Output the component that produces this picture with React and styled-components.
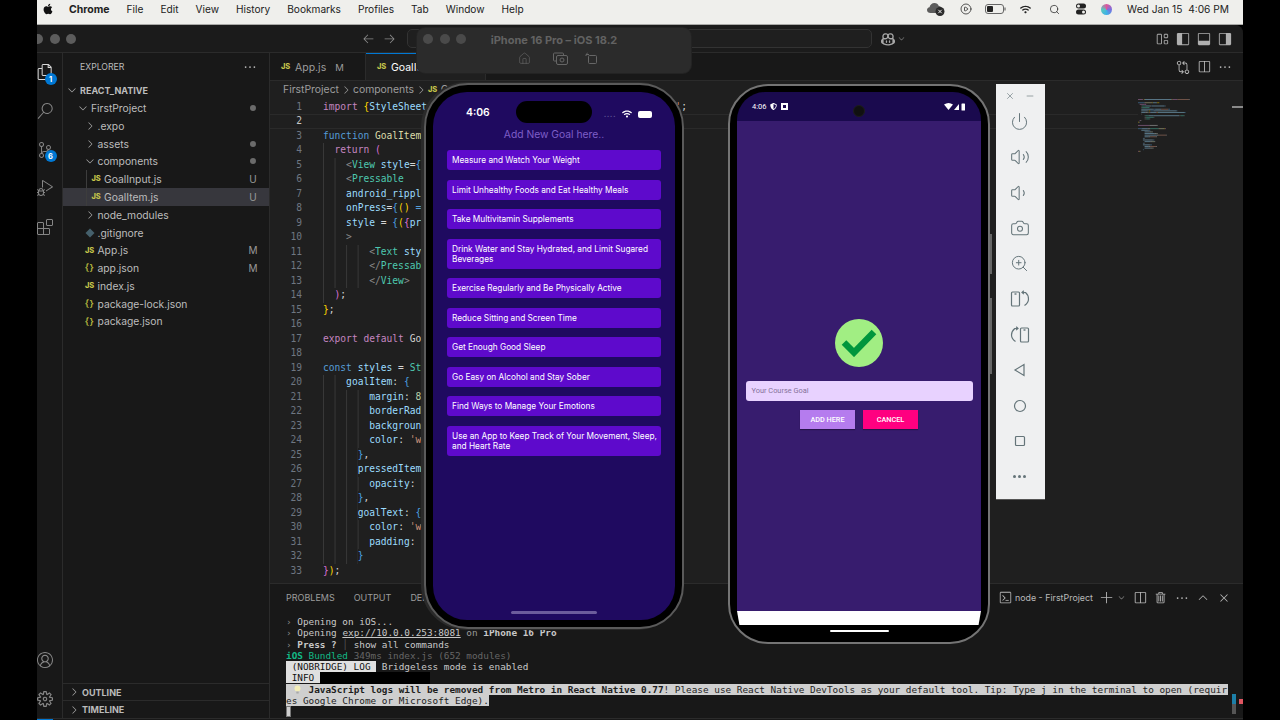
import React from "react";
import styled, { createGlobalStyle, css } from "styled-components";
import { FaApple, FaWifi, FaShieldAlt } from "react-icons/fa";
import {
  VscFiles, VscSearch, VscSourceControl, VscDebugAlt, VscExtensions, VscAccount, VscSettingsGear,
  VscEllipsis, VscChevronRight, VscChevronDown, VscChevronUp, VscTerminal, VscAdd, VscSplitHorizontal,
  VscTrash, VscClose, VscLayoutSidebarLeft, VscLayoutPanel, VscLayoutSidebarRight, VscLayout,
  VscArrowLeft, VscArrowRight, VscCopilot, VscGitCompare,
} from "react-icons/vsc";
import { Power, Volume2, Volume1, Camera, ZoomIn, X, Minus, House, CirclePlay, Search } from "lucide-react";

const UI = `Inter, "Liberation Sans", sans-serif`;
const MONO = `"DejaVu Sans Mono", "Liberation Mono", monospace`;

const Global = createGlobalStyle`
  html, body { margin: 0; padding: 0; background: #000; width: 1280px; height: 720px; overflow: hidden; }
  * { box-sizing: border-box; }
  #root { width: 1280px; height: 720px; }
`;

const Page = styled.div`
  position: relative; width: 1280px; height: 720px; padding: 0 37px; background: #000; font-family: ${UI};
`;
const Desktop = styled.div`
  width: 1206px; height: 720px; display: flex; flex-direction: column; background: #000;
`;

/* menu bar */
const MenuBar = styled.header`
  height: 25px; flex: none; display: flex; align-items: center; background: #efefec; border-bottom: 1px solid #a9a9a7;
  color: #222; font-size: 10.15px; padding: 0 0 6px 5px;
`;
const AppleMark = styled.span`display: flex; width: 12px; margin-right: 15px; font-size: 12px; color: #111;`;
const MenuItems = styled.nav`display: flex; gap: 17px;`;
const MenuItem = styled.span`font-weight: ${p => (p.$bold ? 700 : 400)}; font-size: ${p => (p.$bold ? "10.5px" : "inherit")};`;
const Tray = styled.div`margin-left: auto; display: flex; align-items: center; padding-right: 14px; color: #222;`;
const TraySlot = styled.span`display: flex; align-items: center; justify-content: center; width: ${p => p.$w}px;`;
const Clock = styled.span`margin-left: 8.5px; font-size: 10.2px; white-space: pre;`;
const Siri = styled.span`
  display: block; width: 11px; height: 11px; border-radius: 50%;
  background: conic-gradient(#e0569a, #7a6fe0, #3fb2e6, #58c7c0, #e0569a);
`;

/* window */
const Win = styled.section`
  flex: 1; min-height: 0; display: flex; flex-direction: column; overflow: hidden; background: #181818;
  border-top-right-radius: 8px; color: #c4c4c4;
`;
const TitleBar = styled.div`
  height: 28px; flex: none; display: flex; align-items: center; background: #1b1b1b; border-bottom: 1px solid #2b2b2b; padding-right: 11px;
`;
const Lights = styled.div`display: flex; gap: 6.5px; margin-left: -4px;`;
const Light = styled.span`display: block; width: 10px; height: 10px; border-radius: 50%; background: #5c5c5c;`;
const NavArrows = styled.div`display: flex; gap: 8px; margin-left: 286px; color: #8a8a8a; font-size: 13px;`;
const IconBox = styled.span`display: flex; align-items: center; justify-content: center; width: ${p => p.$w || 14}px; flex: none;`;
const CommandBox = styled.div`
  width: 465px; height: 19px; margin-left: 11px; border: 1px solid #333; border-radius: 5px; background: #1f1f1f;
`;
const Copilot = styled.div`display: flex; align-items: center; gap: 2px; margin-left: 9px; color: #a8a8a8; font-size: 14px;`;
const Actions = styled.div`margin-left: auto; display: flex; gap: 7px; color: #b0b0b0; font-size: 14px;`;

const Workbench = styled.div`flex: 1; min-height: 0; display: flex;`;
const Strip = styled.div`
  height: 2px; flex: none; background: #181818; border-top: 1px solid #2b2b2b;
`;
const StripBlue = styled.div`width: 16px; height: 100%; background: #0078d4;`;

/* activity bar */
const Activity = styled.aside`
  width: 26px; flex: none; display: flex; flex-direction: column; border-right: 1px solid #2b2b2b; overflow: hidden;
`;
const ActivitySlot = styled.div`
  position: relative; height: 38.7px; flex: none; display: flex; align-items: center; justify-content: flex-end;
  padding-right: 9px; font-size: 22px; color: ${p => (p.$active ? "#d7d7d7" : "#868686")};
`;
const ActivityGap = styled.div`flex: 1;`;
const Badge = styled.span`
  position: absolute; left: 7.5px; top: 20px; width: 12px; height: 12px; border-radius: 50%; background: #0078d4; color: #fff;
  font-size: 7.5px; font-weight: 700; display: flex; align-items: center; justify-content: center;
`;

/* sidebar */
const Sidebar = styled.aside`
  width: 207px; flex: none; display: flex; flex-direction: column; border-right: 1px solid #2b2b2b; background: #181818;
`;
const SideHead = styled.div`
  height: 28.5px; flex: none; display: flex; align-items: center; justify-content: space-between; padding: 0 12px 0 17px;
  font-size: 8.7px; color: #bbb;
`;
const HeadDots = styled.span`display: flex; font-size: 14px; color: #bbb;`;
const Row = styled.div`
  position: relative; height: 17.77px; flex: none; display: flex; align-items: center; font-size: 10.3px; color: #bdbdbd;
  padding-left: ${p => p.$indent}px; padding-right: 12px;
  background: ${p => (p.$selected ? "#37373d" : "transparent")};
  font-weight: ${p => (p.$strong ? 700 : 400)};
  ${p => p.$strong && css`font-size: 9px;`}
  ${p => p.$guide && css`
    &::before { content: ""; position: absolute; left: 23px; top: 0; bottom: 0; width: 1px; background: #3d3d3d; }
  `}
`;
const Lead = styled.span`display: flex; align-items: center; justify-content: center; width: 12px; margin-right: 2px; flex: none; font-size: 12px; color: #a8a8a8;`;
const RowLabel = styled.span`flex: 1; white-space: nowrap;`;
const RowMark = styled.span`width: 8px; display: flex; justify-content: center; font-size: 10px; font-weight: 400; color: #9a9a9a;`;
const ModDot = styled.span`display: block; width: 6px; height: 6px; border-radius: 50%; background: #6b6b6b;`;
const FileGlyph = styled.span`
  font-family: ${UI}; font-weight: 800; font-size: 7.5px; color: #c4c44a; letter-spacing: -0.2px; line-height: 1;
`;
const BraceGlyph = styled(FileGlyph)`font-size: 9.5px; font-weight: 600; color: #b5b53f; letter-spacing: 0.4px;`;
const Fill = styled.div`flex: 1;`;
const SideFoot = styled.div`
  height: 17.6px; flex: none; display: flex; align-items: center; padding-left: 5px; border-top: 1px solid #2b2b2b; font-size: 9px; font-weight: 700; color: #bbb;
`;

/* editor */
const Main = styled.main`flex: 1; min-width: 0; display: flex; flex-direction: column; background: #1f1f1f;`;
const Tabs = styled.div`height: 28px; flex: none; display: flex; align-items: stretch; background: #181818; border-bottom: 1px solid #2b2b2b;`;
const Tab = styled.div`
  width: ${p => p.$w}px; flex: none; display: flex; align-items: center; gap: 5px; padding-left: 11px; font-size: 10.5px;
  color: ${p => (p.$active ? "#fff" : "#9d9d9d")}; background: ${p => (p.$active ? "#1f1f1f" : "transparent")};
  border-right: 1px solid #2b2b2b; border-top: 1px solid ${p => (p.$active ? "#0078d4" : "transparent")};
`;
const TabMark = styled.span`margin-left: 4px; font-size: 9.5px; color: #9d9d9d;`;
const TabActions = styled.div`margin-left: auto; display: flex; align-items: center; gap: 7px; padding-right: 11px; font-size: 14px; color: #b8b8b8;`;
const Crumbs = styled.div`
  height: 17px; flex: none; display: flex; align-items: center; gap: 1px; padding-left: 13px; font-size: 10.4px; color: #9d9d9d; white-space: nowrap;
`;
const CrumbSep = styled.span`display: flex; font-size: 12px;`;
const CodeWrap = styled.div`flex: 1; min-height: 0; display: flex; position: relative;`;
const Code = styled.div`flex: 1; min-width: 0; padding-top: 1.5px; font-family: ${MONO}; font-size: 9.6px; line-height: 14.5px;`;
const CodeLine = styled.div`
  display: flex; height: 14.5px; white-space: pre;
  ${p => p.$current && css`box-shadow: inset 0 1px 0 #2a2a2a, inset 0 -1px 0 #2a2a2a;`}
`;
const Gutter = styled.span`width: 53px; flex: none; text-align: right; padding-right: 21px; color: ${p => (p.$current ? "#c6c6c6" : "#6e7681")};`;
const Guides = styled.span`
  display: inline-block; height: 100%; vertical-align: top; width: ${p => p.$n * 5.78}px;
  background-image: linear-gradient(90deg, #383838 0 1px, transparent 1px);
  background-size: 11.56px 100%;
`;
const Tok = styled.span`color: ${p => p.$c};`;
const Miniside = styled.div`width: 105px; flex: none; position: relative; display: flex;`;
const MiniCol = styled.div`width: 94px; padding-top: 1px; flex: none;`;
const Ruler = styled.div`flex: 1; padding-top: 8px;`;
const RulerMark = styled.div`height: 2px; background: #8a8a8a;`;

/* panel */
const Panel = styled.section`
  height: 135px; flex: none; display: flex; flex-direction: column; background: #181818; border-top: 1px solid #2b2b2b; position: relative;
`;
const PanelBar = styled.div`height: 27px; flex: none; display: flex; align-items: center; padding: 0 12px 0 16px; font-size: 9px; color: #9d9d9d;`;
const PanelTabs = styled.div`display: flex; gap: 19px;`;
const PanelActs = styled.div`margin-left: auto; display: flex; align-items: center; gap: 7px; font-size: 14px; color: #b8b8b8;`;
const TermName = styled.div`display: flex; align-items: center; gap: 3px; font-size: 8.9px; color: #b8b8b8;`;
const TermChip = styled.span`display: flex; font-size: 13px;`;
const AddGroup = styled.div`display: flex; align-items: center; gap: 3px;`;
const Term = styled.div`
  padding: 5px 0 0 16px; font-family: ${MONO}; font-size: 9.37px; line-height: 11.25px; color: #c8c8c8;
`;
const TermLine = styled.div`
  height: 11.25px; white-space: pre;
  ${p => p.$sel && css`width: ${p.$sel}px; background: #cfcfcf; color: #1d1d1d;`}
`;
const T = styled.span`
  color: ${p => p.$c || "inherit"};
  font-weight: ${p => (p.$b ? 700 : 400)};
  ${p => p.$u && css`text-decoration: underline;`}
  ${p => p.$bg && css`background: ${p.$bg};`}
`;
const Filler = styled.span`display: inline-block; vertical-align: top; height: 11.25px; width: ${p => p.$w}px; background: #000;`;
const BulbBox = styled.span`display: inline-block; vertical-align: top; width: 11.28px; height: 11.25px;`;
const Cursor = styled.span`display: block; width: 5px; height: 10.5px; background: #cfcfcf; border: 1px solid #777;`;
const TermScroll = styled.div`position: absolute; right: 7px; top: 110px; width: 4px; height: 20px; background: linear-gradient(#1d7fa8 0 50%, #555 50%);`;
const TermMark = styled.div`position: absolute; right: 0; top: 115px; width: 4px; height: 5px; background: #e05561;`;

/* simulator title window */
const SimBar = styled.div`
  position: absolute; left: 417px; top: 28px; width: 274px; height: 45px; border-radius: 8px; background: #2b2b2b;
  box-shadow: 0 0 0 1px #232323; display: flex; flex-direction: column; align-items: center; padding-top: 5px; color: #666;
`;
const SimLights = styled.div`position: absolute; left: 6px; top: 6px; display: flex; gap: 6.5px;`;
const SimLight = styled.span`display: block; width: 10px; height: 10px; border-radius: 50%; background: #4a4a4a;`;
const SimTitle = styled.div`font-size: 11px; font-weight: 700; line-height: 14px; color: #626262;`;
const SimTools = styled.div`display: flex; align-items: center; margin-top: 5px; margin-left: 8px;`;
const SimGap = styled.span`display: block; width: ${p => p.$w}px;`;

/* iPhone */
const IPhone = styled.div`
  position: absolute; left: 424px; top: 83px; width: 260px; height: 546px; padding: 7px; border-radius: 44px; background: #000;
  border: 2px solid #5a5a5a; box-shadow: -2px 0 0 1px #2a2a2a;
`;
const IScreen = styled.div`
  position: relative; width: 100%; height: 100%; border-radius: 34px; overflow: hidden; background: #1f0a60; color: #fff;
`;
const Island = styled.div`position: absolute; left: 83px; top: 9px; width: 76px; height: 22px; border-radius: 11px; background: #000;`;
const IStatus = styled.div`height: 34px; display: flex; align-items: flex-end; padding: 0 23px 7px 33px; justify-content: space-between;`;
const ITime = styled.span`font-size: 10.4px; font-weight: 600; line-height: 13px;`;
const IIcons = styled.div`display: flex; align-items: center; gap: 6px;`;
const IDots = styled.span`font-size: 9px; letter-spacing: 0.5px; color: #5d4f92; line-height: 8px;`;
const IBattery = styled.span`display: block; width: 14px; height: 7px; border-radius: 2px; background: #fff;`;
const GoalTitle = styled.div`height: 24px; text-align: center; font-size: 10.3px; line-height: 17px; color: #7e5ec8;`;
const GoalList = styled.ul`list-style: none; margin: 0; padding: 0 14px; display: flex; flex-direction: column; gap: 9.55px;`;
const Goal = styled.li`
  padding: 5px 3px 5px 5px; border-radius: 3px; background: #5e0acc; font-size: 8.27px; line-height: 10px; color: #fff;
`;
const HomeBar = styled.div`position: absolute; left: 78px; bottom: 6px; width: 86px; height: 3px; border-radius: 2px; background: #6c5c9c;`;

/* Android */
const Android = styled.div`
  position: absolute; left: 728px; top: 84px; width: 262px; height: 560px; padding: 6px 7px 0; border-radius: 40px; background: #000;
  border: 2px solid #747474;
`;
const SideKey = styled.div`position: absolute; right: -4px; top: ${p => p.$top}px; width: 2px; height: ${p => p.$h}px; background: #666;`;
const AScreen = styled.div`display: flex; flex-direction: column; height: 100%;`;
const AStatus = styled.div`
  position: relative; height: 29px; flex: none; display: flex; align-items: center; justify-content: space-between; padding: 0 15px 0 15px;
  background: #1a0a4e; border-radius: 28px 28px 0 0; color: #fff; font-family: Roboto, sans-serif; font-size: 7.5px;
`;
const AGroup = styled.div`display: flex; align-items: center; gap: 4px;`;
const ACam = styled.div`
  position: absolute; left: 116px; top: 13px; width: 12px; height: 12px; border-radius: 50%; background: #101010; border: 1px solid #1d1d1d;
`;
const ABody = styled.div`
  height: 490px; flex: none; display: flex; flex-direction: column; align-items: center; padding: 198px 8px 0; background: #371c6e;
  font-family: Roboto, sans-serif;
`;
const Check = styled.div`
  width: 48px; height: 48px; border-radius: 50%; background: #a1ee83; display: flex; align-items: center; justify-content: center;
`;
const GoalInput = styled.div`
  width: 227px; height: 20px; margin-top: 14px; border-radius: 3px; background: #e8d2ff; color: #85739a; font-size: 7.4px; line-height: 20px; padding-left: 6px;
`;
const BtnRow = styled.div`display: flex; gap: 8px; margin-top: 9px;`;
const ABtn = styled.div`
  width: 55px; height: 19px; background: ${p => p.$bg}; color: #fff; font-size: 7.3px; font-weight: 500; display: flex; align-items: center; justify-content: center; box-shadow: 0 1px 1px rgba(0,0,0,.3);
`;
const ANav = styled.div`height: 14px; flex: none; background: #fff; clip-path: polygon(0 0, 100% 0, 99% 100%, 1% 100%);`;
const AFoot = styled.div`flex: 1; padding-top: 5px; display: flex; justify-content: center;`;
const APill = styled.div`width: 59px; height: 2px; background: #fff; border-radius: 1px;`;

/* Emulator toolbar */
const Tools = styled.aside`
  position: absolute; left: 996px; top: 84px; width: 49px; height: 415px; background: #eff0f1; color: #647479; display: flex; flex-direction: column; align-items: center;
  box-shadow: 0 1px 0 #555;
`;
const ToolHead = styled.div`height: 20px; width: 100%; flex: none; display: flex; align-items: center; justify-content: space-between; padding: 4px 10px 0 9px;`;
const ToolSlot = styled.div`height: 35.5px; width: 100%; padding-right: 2px; flex: none; display: flex; align-items: center; justify-content: center;`;
const ToolDots = styled.div`display: flex; gap: 2px;`;
const ToolDot = styled.span`display: block; width: 3px; height: 3px; border-radius: 50%; background: #647479;`;

const Col = { kw: "#c586c0", fn: "#dcdcaa", v: "#9cdcfe", s: "#ce9178", tag: "#4ec9b0", p: "#8a8a8a", y: "#ffd700", w: "#d4d4d4", pu: "#da70d6", blue: "#4a9fe0", k2: "#569cd6", n: "#b5cea8" };

const codeLines = [
  [0, [["import", Col.kw], [" ", Col.w], ["{", Col.y], ["StyleSheet, View, Text, Pressable", Col.v], ["}", Col.y], [" from ", Col.kw], ["'react-native'", Col.s], [";", Col.w]]],
  [0, []],
  [0, [["function", Col.k2], [" GoalItem", Col.fn], ["(", Col.y], ["props", Col.v], [")", Col.y], [" {", Col.y]]],
  [2, [["return", Col.kw], [" (", Col.pu]]],
  [4, [["<", Col.p], ["View", Col.tag], [" style", Col.v], ["=", Col.w], ["{", Col.blue], ["styles.goalItem", Col.v], ["}", Col.blue], [">", Col.p]]],
  [4, [["<", Col.p], ["Pressable", Col.tag]]],
  [4, [["android_ripple", Col.v], ["=", Col.w], ["{{", Col.blue], ["color: ", Col.v], ["'#dddddd'", Col.s], ["}}", Col.blue]]],
  [4, [["onPress", Col.v], ["=", Col.w], ["{", Col.blue], ["()", Col.y], [" => ", Col.k2], ["props.onDeleteItem(props.id)", Col.v], ["}", Col.blue]]],
  [4, [["style", Col.v], [" = ", Col.w], ["{", Col.blue], ["(", Col.y], ["{", Col.pu], ["pressed", Col.v], ["}", Col.pu], [")", Col.y], [" => pressed && styles.pressedItem", Col.v], ["}", Col.blue]]],
  [4, [[">", Col.p]]],
  [8, [["<", Col.p], ["Text", Col.tag], [" style", Col.v], ["={styles.goalText}>{props.text}", Col.v], ["</", Col.p], ["Text", Col.tag], [">", Col.p]]],
  [8, [["</", Col.p], ["Pressable", Col.tag], [">", Col.p]]],
  [8, [["</", Col.p], ["View", Col.tag], [">", Col.p]]],
  [2, [[")", Col.pu], [";", Col.w]]],
  [0, [["}", Col.y], [";", Col.w]]],
  [0, []],
  [0, [["export default", Col.kw], [" GoalItem", Col.w], [";", Col.w]]],
  [0, []],
  [0, [["const", Col.k2], [" styles", Col.v], [" = ", Col.w], ["StyleSheet", Col.tag], [".create", Col.fn], ["(", Col.y], ["{", Col.pu]]],
  [4, [["goalItem", Col.v], [":", Col.w], [" {", Col.blue]]],
  [8, [["margin", Col.v], [": ", Col.w], ["8", Col.n], [",", Col.w]]],
  [8, [["borderRadius", Col.v], [": ", Col.w], ["6", Col.n], [",", Col.w]]],
  [8, [["backgroundColor", Col.v], [": ", Col.w], ["'#5e0acc'", Col.s], [",", Col.w]]],
  [8, [["color", Col.v], [": ", Col.w], ["'white'", Col.s], [",", Col.w]]],
  [6, [["}", Col.blue], [",", Col.w]]],
  [6, [["pressedItem", Col.v], [":", Col.w], [" {", Col.blue]]],
  [8, [["opacity", Col.v], [": ", Col.w], ["0.5", Col.n], [",", Col.w]]],
  [6, [["}", Col.blue], [",", Col.w]]],
  [6, [["goalText", Col.v], [":", Col.w], [" {", Col.blue]]],
  [8, [["color", Col.v], [": ", Col.w], ["'white'", Col.s], [",", Col.w]]],
  [8, [["padding", Col.v], [": ", Col.w], ["8", Col.n], [",", Col.w]]],
  [6, [["}", Col.blue]]],
  [0, [["}", Col.pu], [")", Col.y], [";", Col.w]]],
];

function Minimap() {
  const rects = [];
  codeLines.forEach(([indent, toks], i) => {
    let x = indent * 0.82;
    toks.forEach(([t, c], j) => {
      const w = t.length * 0.82;
      if (t.trim()) rects.push(<rect key={`${i}-${j}`} x={x} y={i * 1.62} width={w} height={1} fill={c} opacity={0.45} />);
      x += w;
    });
  });
  return <svg width="94" height="56" viewBox="0 0 94 56">{rects}</svg>;
}

const JS = () => <FileGlyph>JS</FileGlyph>;
const Json = () => <BraceGlyph>{"{}"}</BraceGlyph>;
const GitDiamond = () => (
  <svg width="10" height="10" viewBox="0 0 10 10"><path d="M5 .5 9.5 5 5 9.5.5 5z" fill="#45606c" /></svg>
);

const tree = [
  { n: "REACT_NATIVE", i: 3, lead: <VscChevronDown />, strong: true },
  { n: "FirstProject", i: 14, lead: <VscChevronDown />, dot: true },
  { n: ".expo", i: 20.5, lead: <VscChevronRight /> },
  { n: "assets", i: 20.5, lead: <VscChevronRight />, dot: true },
  { n: "components", i: 20.5, lead: <VscChevronDown />, dot: true },
  { n: "GoalInput.js", i: 27, lead: <JS />, mark: "U", guide: true },
  { n: "GoalItem.js", i: 27, lead: <JS />, mark: "U", guide: true, sel: true },
  { n: "node_modules", i: 20.5, lead: <VscChevronRight /> },
  { n: ".gitignore", i: 20.5, lead: <GitDiamond /> },
  { n: "App.js", i: 20.5, lead: <JS />, mark: "M" },
  { n: "app.json", i: 20.5, lead: <Json />, mark: "M" },
  { n: "index.js", i: 20.5, lead: <JS /> },
  { n: "package-lock.json", i: 20.5, lead: <Json /> },
  { n: "package.json", i: 20.5, lead: <Json /> },
];

const goals = [
  "Measure and Watch Your Weight",
  "Limit Unhealthy Foods and Eat Healthy Meals",
  "Take Multivitamin Supplements",
  "Drink Water and Stay Hydrated, and Limit Sugared Beverages",
  "Exercise Regularly and Be Physically Active",
  "Reduce Sitting and Screen Time",
  "Get Enough Good Sleep",
  "Go Easy on Alcohol and Stay Sober",
  "Find Ways to Manage Your Emotions",
  "Use an App to Keep Track of Your Movement, Sleep, and Heart Rate",
];

const menus = ["File", "Edit", "View", "History", "Bookmarks", "Profiles", "Tab", "Window", "Help"];

const RotateLeft = () => (
  <svg width="20" height="20" viewBox="0 0 20 20" fill="none" stroke="currentColor" strokeWidth="1.2">
    <rect x="1.5" y="3" width="8" height="14" rx="1" />
    <path d="M4.5 5h2" strokeWidth="1.4" />
    <path d="M12 3.5h3.5c2.5 2 3 4 3 6.5s-1 4.500-4 6.500" />
    <path d="M13.800 1.800 12 3.500l2 1.600" />
  </svg>
);
const RotateRight = () => (
  <svg width="20" height="20" viewBox="0 0 20 20" fill="none" stroke="currentColor" strokeWidth="1.2">
    <rect x="10.500" y="3" width="8" height="14" rx="1" />
    <path d="M13.500 5h2" strokeWidth="1.4" />
    <path d="M8 3.500H4.800C2.500 5.500 1.500 7.500 1.500 10s1 4.500 4 6.500" />
    <path d="M6.200 1.800 8 3.500 6 5.100" />
  </svg>
);

const SimRotate = () => (
  <svg width="13" height="13" viewBox="0 0 13 13" fill="none" stroke="currentColor" strokeWidth="1">
    <rect x="3.500" y="3.500" width="8" height="8" rx="1" />
    <path d="M1 4V2.500h3M2.700 1 1 2.500" />
  </svg>
);

const SimShot = () => (
  <svg width="15" height="13" viewBox="0 0 15 13" fill="none" stroke="currentColor" strokeWidth="1">
    <rect x=".5" y="1" width="10" height="8" rx="1" />
    <rect x="3.500" y="3.500" width="11" height="9" rx="1.500" fill="#2b2b2b" />
    <circle cx="9" cy="8" r="2" />
  </svg>
);

const CloudBadge = () => (
  <svg width="18" height="14" viewBox="0 0 18 14">
    <path d="M3.500 11C1.500 11 0 9.700 0 8c0-1.500 1-2.500 2.500-2.800C3 2.800 5 1 7.500 1c2 0 3.700 1.200 4.300 3 1.800.1 3 1.500 3 3.200 0 2.200-1.500 3.800-3.500 3.800z" fill="#5c5c5c" />
    <circle cx="13" cy="9.500" r="4.500" fill="#2a2a2a" />
    <path d="M11.300 7.800 14.700 11.200M14.700 7.800 11.300 11.200" stroke="#eee" strokeWidth="1" />
  </svg>
);
const MacBattery = () => (
  <svg width="22" height="10" viewBox="0 0 22 10" fill="none">
    <rect x=".5" y=".5" width="18" height="9" rx="2.500" stroke="#666" />
    <rect x="2" y="2" width="6" height="6" rx="1" fill="#222" />
    <path d="M20 3.500v3" stroke="#666" strokeWidth="1.200" />
  </svg>
);
const ControlCenter = () => (
  <svg width="12" height="12" viewBox="0 0 12 12">
    <rect x="1" y=".5" width="10" height="5" rx="2.500" fill="#222" />
    <circle cx="3.500" cy="3" r="1.500" fill="#efefec" />
    <rect x="1" y="6.500" width="10" height="5" rx="2.500" fill="#222" />
    <circle cx="8.500" cy="9" r="1.500" fill="#efefec" />
  </svg>
);
const ASignal = () => (
  <svg width="22" height="8" viewBox="0 0 22 8" fill="#fff">
    <path d="M0 1.500C1.500.5 3 0 4.500 0S7.500.5 9 1.500L4.500 7z" />
    <path d="M15 1v6h-5z" />
    <rect x="17.500" y=".5" width="3.500" height="7" rx=".6" />
  </svg>
);
const AShot = () => (
  <svg width="7" height="7" viewBox="0 0 7 7"><path d="M0 0h7v7H0z" fill="#fff" /><path d="M2 2h3v3H2z" fill="#1a0a4e" /></svg>
);
const Bulb = () => (
  <BulbBox>
    <svg width="11" height="11" viewBox="0 0 11 11">
      <circle cx="5.500" cy="4.500" r="3" fill="#f4eeb8" />
      <rect x="4.300" y="7.500" width="2.400" height="2" fill="#a8a8a8" />
    </svg>
  </BulbBox>
);

export default function App() {
  return (
    <Page>
      <Global />
      <Desktop>
        <MenuBar>
          <AppleMark><FaApple /></AppleMark>
          <MenuItems>
            <MenuItem $bold>Chrome</MenuItem>
            {menus.map(m => <MenuItem key={m}>{m}</MenuItem>)}
          </MenuItems>
          <Tray>
            <TraySlot $w={29}><CloudBadge /></TraySlot>
            <TraySlot $w={30}><CirclePlay size={12} strokeWidth={1.5} /></TraySlot>
            <TraySlot $w={30}><MacBattery /></TraySlot>
            <TraySlot $w={30}><FaWifi size={11} /></TraySlot>
            <TraySlot $w={28}><Search size={11} strokeWidth={1.6} /></TraySlot>
            <TraySlot $w={25}><ControlCenter /></TraySlot>
            <TraySlot $w={25}><Siri /></TraySlot>
            <Clock>Wed Jan 15  4:06 PM</Clock>
          </Tray>
        </MenuBar>
        <Win>
          <TitleBar>
            <Lights><Light /><Light /><Light /></Lights>
            <NavArrows><IconBox $w={13}><VscArrowLeft /></IconBox><IconBox $w={13}><VscArrowRight /></IconBox></NavArrows>
            <CommandBox />
            <Copilot><VscCopilot /><VscChevronDown size={9} /></Copilot>
            <Actions>
              <IconBox><VscLayout /></IconBox>
              <IconBox><VscLayoutSidebarLeft /></IconBox>
              <IconBox><VscLayoutPanel /></IconBox>
              <IconBox><VscLayoutSidebarRight /></IconBox>
            </Actions>
          </TitleBar>
          <Workbench>
            <Activity>
              <ActivitySlot $active><VscFiles /><Badge>1</Badge></ActivitySlot>
              <ActivitySlot><VscSearch /></ActivitySlot>
              <ActivitySlot><VscSourceControl /><Badge>6</Badge></ActivitySlot>
              <ActivitySlot><VscDebugAlt /></ActivitySlot>
              <ActivitySlot><VscExtensions /></ActivitySlot>
              <ActivityGap />
              <ActivitySlot><VscAccount /></ActivitySlot>
              <ActivitySlot><VscSettingsGear /></ActivitySlot>
            </Activity>
            <Sidebar>
              <SideHead>EXPLORER<HeadDots><VscEllipsis /></HeadDots></SideHead>
              {tree.map(r => (
                <Row key={r.n} $indent={r.i} $selected={r.sel} $strong={r.strong} $guide={r.guide}>
                  <Lead>{r.lead}</Lead>
                  <RowLabel>{r.n}</RowLabel>
                  <RowMark>{r.dot ? <ModDot /> : r.mark}</RowMark>
                </Row>
              ))}
              <Fill />
              <SideFoot><Lead><VscChevronRight /></Lead>OUTLINE</SideFoot>
              <SideFoot><Lead><VscChevronRight /></Lead>TIMELINE</SideFoot>
            </Sidebar>
            <Main>
              <Tabs>
                <Tab $w={96}><JS />App.js<TabMark>M</TabMark></Tab>
                <Tab $w={120} $active><JS />GoalItem.js<TabMark>U</TabMark></Tab>
                <TabActions>
                  <IconBox><VscGitCompare /></IconBox>
                  <IconBox><VscSplitHorizontal /></IconBox>
                  <IconBox><VscEllipsis /></IconBox>
                </TabActions>
              </Tabs>
              <Crumbs>
                FirstProject<CrumbSep><VscChevronRight /></CrumbSep>components<CrumbSep><VscChevronRight /></CrumbSep><JS />&nbsp;GoalItem.js
              </Crumbs>
              <CodeWrap>
                <Code>
                  {codeLines.map(([indent, toks], i) => (
                    <CodeLine key={i} $current={i === 1}>
                      <Gutter $current={i === 1}>{i + 1}</Gutter>
                      <span>
                        {indent > 0 && <Guides $n={indent} />}
                        {toks.map(([t, c], j) => <Tok key={j} $c={c}>{t}</Tok>)}
                      </span>
                    </CodeLine>
                  ))}
                </Code>
                <Miniside>
                  <MiniCol><Minimap /></MiniCol>
                  <Ruler><RulerMark /></Ruler>
                </Miniside>
              </CodeWrap>
              <Panel>
                <PanelBar>
                  <PanelTabs><span>PROBLEMS</span><span>OUTPUT</span><span>DEBUG CONSOLE</span></PanelTabs>
                  <PanelActs>
                    <TermName><TermChip><VscTerminal /></TermChip>node - FirstProject</TermName>
                    <AddGroup><IconBox><VscAdd /></IconBox><VscChevronDown size={9} /></AddGroup>
                    <IconBox><VscSplitHorizontal /></IconBox>
                    <IconBox><VscTrash /></IconBox>
                    <IconBox><VscEllipsis /></IconBox>
                    <IconBox><VscChevronUp /></IconBox>
                    <IconBox><VscClose /></IconBox>
                  </PanelActs>
                </PanelBar>
                <Term>
                  <TermLine><T $c="#888">› </T>Opening on iOS...</TermLine>
                  <TermLine><T $c="#888">› </T>Opening <T $u>exp://10.0.0.253:8081</T> <T $c="#999">on</T> <T $b>iPhone 16 Pro</T></TermLine>
                  <TermLine><T $c="#888">› </T><T $b>Press ?</T> <T $c="#555">│</T> show all commands</TermLine>
                  <TermLine><T $c="#12b886" $b>iOS</T> <T $c="#12b886">Bundled</T> <T $c="#666">349ms index.js (652 modules)</T></TermLine>
                  <TermLine><T $bg="#e0e0e0" $c="#111"> (NOBRIDGE) LOG </T> Bridgeless mode is enabled</TermLine>
                  <TermLine><T $bg="#e0e0e0" $c="#111"> INFO </T><Filler $w={110} /></TermLine>
                  <TermLine $sel={942}> <Bulb /> <T $b>JavaScript logs will be removed from Metro in React Native 0.77</T>! Please use React Native DevTools as your default tool. Tip: Type j in the terminal to open (requir</TermLine>
                  <TermLine $sel={203}>es Google Chrome or Microsoft Edge).</TermLine>
                  <TermLine><Cursor /></TermLine>
                </Term>
                <TermScroll />
                <TermMark />
              </Panel>
            </Main>
          </Workbench>
          <Strip><StripBlue /></Strip>
        </Win>
      </Desktop>

      <SimBar>
        <SimLights><SimLight /><SimLight /><SimLight /></SimLights>
        <SimTitle>iPhone 16 Pro – iOS 18.2</SimTitle>
        <SimTools>
          <House size={13} strokeWidth={1.2} />
          <SimGap $w={22} />
          <SimShot />
          <SimGap $w={17} />
          <SimRotate />
        </SimTools>
      </SimBar>

      <IPhone>
        <IScreen>
          <Island />
          <IStatus>
            <ITime>4:06</ITime>
            <IIcons><IDots>....</IDots><FaWifi size={10} /><IBattery /></IIcons>
          </IStatus>
          <GoalTitle>Add New Goal here..</GoalTitle>
          <GoalList>{goals.map(g => <Goal key={g}>{g}</Goal>)}</GoalList>
          <HomeBar />
        </IScreen>
      </IPhone>

      <Android>
        <SideKey $top={148} $h={40} />
        <SideKey $top={212} $h={76} />
        <AScreen>
          <AStatus>
            <AGroup>4:06<FaShieldAlt size={7} /><AShot /></AGroup>
            <ACam />
            <ASignal />
          </AStatus>
          <ABody>
            <Check>
              <svg width="36" height="28" viewBox="0 0 36 28" fill="none">
                <path d="M3 13.500 13 23.500 33 3" stroke="#00963d" strokeWidth="6.500" />
              </svg>
            </Check>
            <GoalInput>Your Course Goal</GoalInput>
            <BtnRow>
              <ABtn $bg="#b57cee">ADD HERE</ABtn>
              <ABtn $bg="#ff0080">CANCEL</ABtn>
            </BtnRow>
          </ABody>
          <ANav />
          <AFoot><APill /></AFoot>
        </AScreen>
      </Android>

      <Tools>
        <ToolHead><X size={10} strokeWidth={1.5} /><Minus size={10} strokeWidth={1.5} /></ToolHead>
        <ToolSlot><Power size={19} strokeWidth={1.25} /></ToolSlot>
        <ToolSlot><Volume2 size={20} strokeWidth={1.25} /></ToolSlot>
        <ToolSlot><Volume1 size={20} strokeWidth={1.25} /></ToolSlot>
        <ToolSlot><Camera size={20} strokeWidth={1.25} /></ToolSlot>
        <ToolSlot><ZoomIn size={19} strokeWidth={1.25} /></ToolSlot>
        <ToolSlot><RotateLeft /></ToolSlot>
        <ToolSlot><RotateRight /></ToolSlot>
        <ToolSlot>
          <svg width="14" height="14" viewBox="0 0 14 14" fill="none" stroke="currentColor" strokeWidth="1.2"><path d="M2 7 11 1.500v11z" /></svg>
        </ToolSlot>
        <ToolSlot>
          <svg width="14" height="14" viewBox="0 0 14 14" fill="none" stroke="currentColor" strokeWidth="1.2"><circle cx="7" cy="7" r="5.500" /></svg>
        </ToolSlot>
        <ToolSlot>
          <svg width="12" height="12" viewBox="0 0 12 12" fill="none" stroke="currentColor" strokeWidth="1.2"><rect x="1.500" y="1.500" width="9" height="9" rx="1" /></svg>
        </ToolSlot>
        <ToolSlot><ToolDots><ToolDot /><ToolDot /><ToolDot /></ToolDots></ToolSlot>
      </Tools>
    </Page>
  );
}
